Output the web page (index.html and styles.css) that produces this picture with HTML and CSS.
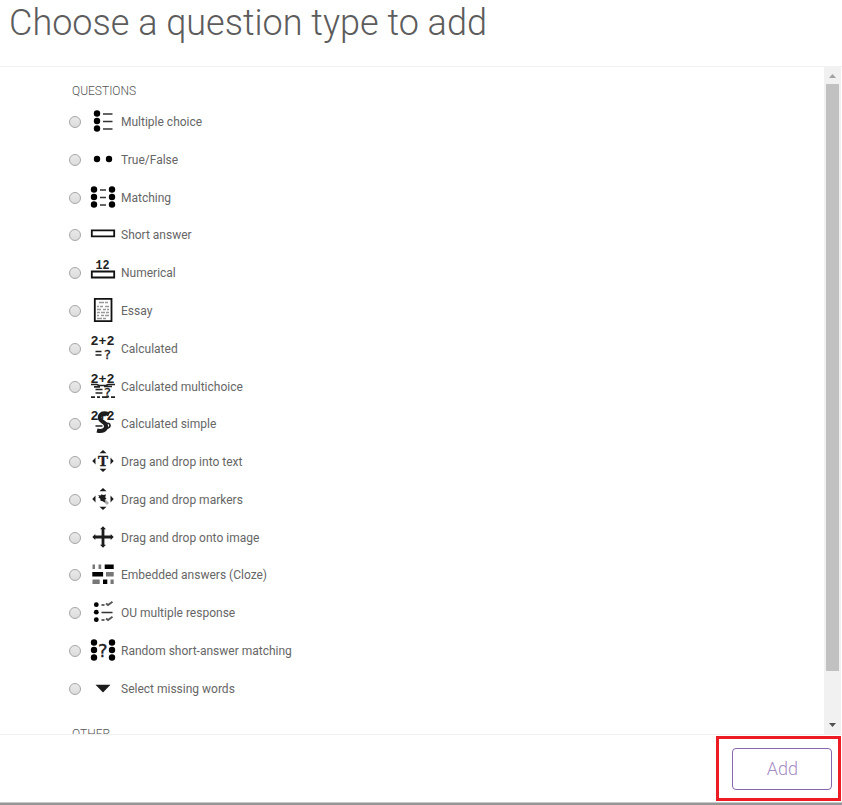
FILE: index.html
```
<!DOCTYPE html>
<html lang="en">
<head>
  <meta charset="UTF-8" />
  <title>Choose a question type to add</title>
  <link rel="stylesheet" href="styles.css">
</head>
<body>
  <div class="dialog">
    <header class="dialog-header">
      <h1>Choose a question type to add</h1>
    </header>

    <div class="dialog-body">
      <form class="options">
        <div class="section-title">QUESTIONS</div>

        <label class="option">
          <input type="radio" name="qtype">
          <svg class="icon" viewBox="0 0 24 24"><circle cx="6" cy="4.5" r="3.2"/><circle cx="6" cy="12" r="3.2"/><circle cx="6" cy="19.5" r="3.2"/><path class="line" d="M12 5h9.500M12 12.500h9.500M12 20h9.500"/></svg>
          <span>Multiple choice</span>
        </label>
        <label class="option">
          <input type="radio" name="qtype">
          <svg class="icon" viewBox="0 0 24 24"><circle cx="6" cy="12" r="3.2"/><circle cx="18" cy="12" r="3.2"/></svg>
          <span>True/False</span>
        </label>
        <label class="option">
          <input type="radio" name="qtype">
          <svg class="icon" viewBox="0 0 24 24"><circle cx="3" cy="4.500" r="3.2"/><circle cx="3" cy="12" r="3.2"/><circle cx="3" cy="19.500" r="3.2"/><circle cx="21" cy="4.500" r="3.2"/><circle cx="21" cy="12" r="3.2"/><circle cx="21" cy="19.500" r="3.2"/><path class="line" d="M9 5h6M9 12.500h6M9 20h6"/></svg>
          <span>Matching</span>
        </label>
        <label class="option">
          <input type="radio" name="qtype">
          <svg class="icon" viewBox="0 0 24 24"><path class="box" d="M.8 8.300h22.400v6H.8z"/></svg>
          <span>Short answer</span>
        </label>
        <label class="option">
          <input type="radio" name="qtype">
          <svg class="icon" viewBox="0 0 24 24"><text class="digits" x="4.500" y="8.800" textLength="14" lengthAdjust="spacingAndGlyphs">12</text><path class="box" d="M.8 11.500h22.400v6H.8z"/></svg>
          <span>Numerical</span>
        </label>
        <label class="option">
          <input type="radio" name="qtype">
          <svg class="icon" viewBox="0 0 24 24"><path class="box" d="M3.800.8h16.700v22.400H3.800z"/><path class="scribble" d="M8 4.500h5M14 4.500h3M6 8.500h2M9 8.500h3M14 8.500h4M6 11.500h4M12 11.500h3M16 11.500h2M6 14.500h3M10 14.500h4M15 14.500h3M6 17.500h2M10 17.500h3M14 17.500h4M6 20.500h5M12 20.500h3"/></svg>
          <span>Essay</span>
        </label>
        <label class="option">
          <input type="radio" name="qtype">
          <svg class="icon" viewBox="0 0 24 24"><text class="digits" x="-.5" y="9.300" textLength="24" lengthAdjust="spacingAndGlyphs">2+2</text><path class="sign" d="M4.500 15.500h6M4.500 19h6"/><text class="mark" x="13" y="22.500">?</text></svg>
          <span>Calculated</span>
        </label>
        <label class="option">
          <input type="radio" name="qtype">
          <svg class="icon" viewBox="0 0 24 24"><text class="digits" x="-.5" y="9.300" textLength="24" lengthAdjust="spacingAndGlyphs">2+2</text><path class="sign" d="M4.500 15.500h7M4.500 19h7"/><text class="mark" x="13" y="22.500">?</text><path class="sign" d="M0 10.500h6l2 1h7l2-1h7M3 12.800h6M13 12.500h8M0 23.200h4M6 23.200h3M11 23.200h5l2-.8M20 23.200h4"/></svg>
          <span>Calculated multichoice</span>
        </label>
        <label class="option">
          <input type="radio" name="qtype">
          <svg class="icon" viewBox="0 0 24 24"><text class="digits" x="-.5" y="8.500" textLength="24" lengthAdjust="spacingAndGlyphs">2+2</text><path class="swirl" d="M18 3.500Q12 1 9.500 4Q7 7.500 11.500 10.500Q16.500 13.500 14.500 17.500Q12 21 6 19.500"/><path class="sign" d="M4.500 15h7M14 12.500q5-1 5 2q0 2-3 3"/></svg>
          <span>Calculated simple</span>
        </label>
        <label class="option">
          <input type="radio" name="qtype">
          <svg class="icon" viewBox="0 0 24 24"><path class="dark" d="M12 1l3.500 3.200h-7zM12 23l3.500-3.200h-7zM1.300 12l3.200-3.500v7zM22.700 12l-3.200-3.500v7z"/><text class="letter" x="12" y="16.500" textLength="10" lengthAdjust="spacingAndGlyphs">T</text></svg>
          <span>Drag and drop into text</span>
        </label>
        <label class="option">
          <input type="radio" name="qtype">
          <svg class="icon" viewBox="0 0 24 24"><path class="dark" d="M12 1l3.500 3.200h-7zM12 23l3.500-3.200h-7zM1.300 12l3.200-3.500v7zM22.700 12l-3.200-3.500v7z"/><path class="shade" d="M12 12l5 5"/><path class="dark" d="M7 8l2.500.5 1-1.300 1.500.8 3-.5-.8 2.700 1.300 1.500-1.800 1 .6 2.800-2.800-1.300-2-.5-.2-2-2-1.500 1-.8z"/></svg>
          <span>Drag and drop markers</span>
        </label>
        <label class="option">
          <input type="radio" name="qtype">
          <svg class="icon" viewBox="0 0 24 24"><path class="dark" d="M12 1.300l3 3h-1.600v6.300h6.300V9l3 3-3 3v-1.600h-6.300v6.300H15l-3 3-3-3h1.600v-6.300H4.300V15l-3-3 3-3v1.600h6.300V4.300H9z"/></svg>
          <span>Drag and drop onto image</span>
        </label>
        <label class="option">
          <input type="radio" name="qtype">
          <svg class="icon" viewBox="0 0 24 24"><path class="gray" d="M1.500 2.500h2.500v4.500h-2.500zM7.500 2.500h2.700v4.500h-2.700zM15 10h7.700v4.500H15zM1.500 17.500h7.200v4.500H1.500zM19.500 17.500h3.200v4.500h-3.200z"/><path d="M13.700 2.500h9v4.500h-9zM1.300 10h10.800v4.500H1.300zM12 17.500h4.300v4.500H12z"/></svg>
          <span>Embedded answers (Cloze)</span>
        </label>
        <label class="option">
          <input type="radio" name="qtype">
          <svg class="icon" viewBox="0 0 24 24"><circle cx="5.300" cy="4.700" r="2.400"/><circle cx="5.300" cy="12.200" r="2.400"/><circle cx="5.300" cy="19.700" r="2.400"/><path class="line" d="M10.500 5h3M10.500 12.500h11M10.500 20h3"/><path class="tick" d="M15 3.500l2 1.500L21.500 1.800M15 18.500l2 1.500L21.500 16.800"/></svg>
          <span>OU multiple response</span>
        </label>
        <label class="option">
          <input type="radio" name="qtype">
          <svg class="icon" viewBox="0 0 24 24"><circle cx="3" cy="4.500" r="3.200"/><circle cx="3" cy="12" r="3.200"/><circle cx="3" cy="19.500" r="3.200"/><circle cx="21" cy="4.500" r="3.200"/><circle cx="21" cy="12" r="3.200"/><circle cx="21" cy="19.500" r="3.200"/><text class="mark big" x="7" y="18.500">?</text></svg>
          <span>Random short-answer matching</span>
        </label>
        <label class="option">
          <input type="radio" name="qtype">
          <svg class="icon" viewBox="0 0 24 24"><path class="dark" d="M4.500 8.700h15L12 16.500z"/></svg>
          <span>Select missing words</span>
        </label>

        <div class="section-title other">OTHER</div>
      </form>

      <div class="scrollbar">
        <svg class="arrow up" viewBox="0 0 7 4"><path d="M3.500 0L7 4H0z"/></svg>
        <div class="thumb"></div>
        <svg class="arrow down" viewBox="0 0 7 4"><path d="M0 0h7L3.500 4z"/></svg>
      </div>
    </div>

    <footer class="dialog-footer">
      <div class="highlight">
        <button class="add-button" type="button">Add</button>
      </div>
    </footer>
  </div>
</body>
</html>
```
FILE: styles.css
```
body {
  font-family: Roboto, sans-serif;
  background: #fff;
  color: #666;
  margin: 0;
}

.dialog {
  display: flex;
  flex-direction: column;
  height: 805px;
  overflow: hidden;
  box-sizing: border-box;
  border-bottom: 2px solid #969696;
}

.dialog-header {
  box-sizing: border-box;
  height: 67px;
  padding: 1px 0 0 9px;
  border-bottom: 1px solid #f1f1f1;
}

h1 {
  margin: 0;
  color: #5c5c5c;
  font-size: 36px;
  line-height: 44px;
  font-weight: 300;
  white-space: nowrap;
}

.dialog-body {
  display: flex;
  height: 667px;
  padding-right: 1px;
  overflow: hidden;
}

.options {
  flex: 1;
  padding: 15px 0 0 69px;
}

.section-title {
  height: 21.2px;
  padding-left: 3px;
  color: #555;
  font-size: 12px;
  line-height: 18px;
  font-weight: 300;
}

.section-title.other {
  padding-top: 17.5px;
}

.option {
  display: flex;
  align-items: center;
  height: 37.79px;
  font-size: 12px;
}

.option input {
  appearance: none;
  flex: none;
  box-sizing: border-box;
  width: 12px;
  height: 12px;
  margin: 0 10px 0 0;
  border: 1px solid #a6a6a6;
  border-radius: 50%;
  background: linear-gradient(#e9e9e9, #dcdcdc);
}

.option span {
  padding-left: 6px;
  line-height: 18px;
}

.icon {
  flex: none;
  width: 24px;
  height: 24px;
  margin-bottom: 2px;
  overflow: visible;
}

.line {
  stroke: #333;
  stroke-width: 1.5;
}

.box {
  fill: none;
  stroke: #111;
  stroke-width: 1.8;
}

.scribble {
  stroke: #999;
  stroke-width: 1.3;
}

.sign {
  fill: none;
  stroke: #222;
  stroke-width: 1.7;
}

.swirl {
  fill: none;
  stroke: #1c1c1c;
  stroke-width: 4;
}

.dark {
  fill: #1c1c1c;
}

.gray {
  fill: #777;
}

.shade {
  stroke: #aaa;
  stroke-width: 3;
}

.tick {
  fill: none;
  stroke: #555;
  stroke-width: 1.9;
}

.digits {
  font: bold 12px "Liberation Mono", monospace;
  fill: #222;
}

.mark {
  font: 13px "DejaVu Sans", sans-serif;
  fill: #222;
  stroke: #222;
  stroke-width: .3;
}

.mark.big {
  font-size: 18px;
}

.letter {
  font: bold 14px "Liberation Serif", serif;
  text-anchor: middle;
  fill: #1c1c1c;
  stroke: #1c1c1c;
  stroke-width: .4;
}

.scrollbar {
  display: flex;
  flex-direction: column;
  align-items: center;
  width: 17px;
  background: #f1f1f1;
}

.arrow {
  width: 7px;
  height: 4px;
}

.arrow.up {
  margin: 7px 0 6px;
  fill: #a3a3a3;
}

.thumb {
  width: 13px;
  height: 587px;
  background: #c1c1c1;
}

.arrow.down {
  margin-top: 52px;
  fill: #505050;
}

.dialog-footer {
  display: flex;
  justify-content: flex-end;
  flex: 1;
  border-top: 1px solid #f1f1f1;
  border-bottom: 1px solid #c8c8c8;
  padding: 1px 1px 0 0;
}

.highlight {
  box-sizing: border-box;
  width: 125px;
  height: 65px;
  padding: 9px 6px 8px 13px;
  border: 3px solid #ed1c24;
}

.add-button {
  width: 100px;
  height: 42px;
  padding: 0 0 2px 1px;
  border: 1px solid #8565ad;
  border-radius: 4px;
  background: #fff;
  color: #a58cc4;
  font-family: Roboto, sans-serif;
  font-size: 18px;
  font-weight: 300;
}
```
